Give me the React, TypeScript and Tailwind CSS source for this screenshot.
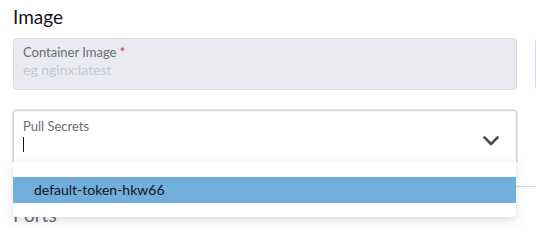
import React from 'react';

const ChevronDown = () => (
  <svg width="16" height="10" viewBox="0 0 16 10" fill="none">
    <path d="M1.5 1.5 L8 8 L14.5 1.5" stroke="#4b4b57" strokeWidth="2.6" strokeLinecap="round" strokeLinejoin="round" />
  </svg>
);

export default function App() {
  return (
    <div className="w-[536px] h-[233px] overflow-hidden bg-white font-['Lato','Liberation_Sans',sans-serif] text-[#141419]">
      <div className="pl-[13px] pt-[5px] w-[700px]">
        <div className="flex gap-[18px]">
          {/* main column */}
          <div className="w-[504px] shrink-0">
            <h3 className="text-[19px] leading-[24px] font-normal">Image</h3>

            {/* Container Image (disabled) */}
            <div className="mt-[9px] h-[52px] rounded-[4px] border border-[#d9dae1] bg-[#eaebf0] px-[9px] pt-[5px]">
              <div className="text-[13px] leading-[16px] text-[#6b6b76]">
                Container Image <span className="text-[#e0242b]">*</span>
              </div>
              <div className="text-[14px] leading-[20px] text-[#c6c8d1]">eg nginx:latest</div>
            </div>

            {/* Pull Secrets select, open */}
            <div className="relative mt-[20px]">
              <div className="h-[52px] rounded-t-[4px] border border-b-0 border-[#d2d3da] bg-white pl-[9px] pr-[17px] pt-[7px] flex items-start shadow-[0_0_0_1px_#e4e5ea]">
                <div className="flex-1">
                  <div className="text-[13px] leading-[16px] text-[#6b6b76]">Pull Secrets</div>
                  <div className="mt-[3px] h-[15px] w-px bg-[#141419]" />
                </div>
                <div className="mt-[18px]">
                  <ChevronDown />
                </div>
              </div>

              <div className="absolute left-0 top-[52px] w-[503px] z-10 rounded-b-[4px] bg-white pt-[15px] pb-[14px] shadow-[0_3px_10px_rgba(60,60,90,0.18)]">
                <div className="h-[26px] bg-[#71aedb] pl-[21px] text-[14px] leading-[26px] text-[#141419]">
                  default-token-hkw66
                </div>
              </div>
            </div>
          </div>

          {/* next column, cut off by the window */}
          <div className="w-[140px] shrink-0">
            <div className="h-[24px]" />
            <div className="mt-[9px] h-[52px] rounded-[4px] border border-[#d9dae1] bg-[#eaebf0]" />
          </div>
        </div>

        <hr className="mt-[24px] border-0 border-t border-[#dcdde3]" />
        <h3 className="mt-[16px] text-[19px] leading-[24px] font-normal text-[#6b6b76]">Ports</h3>
      </div>
    </div>
  );
}
